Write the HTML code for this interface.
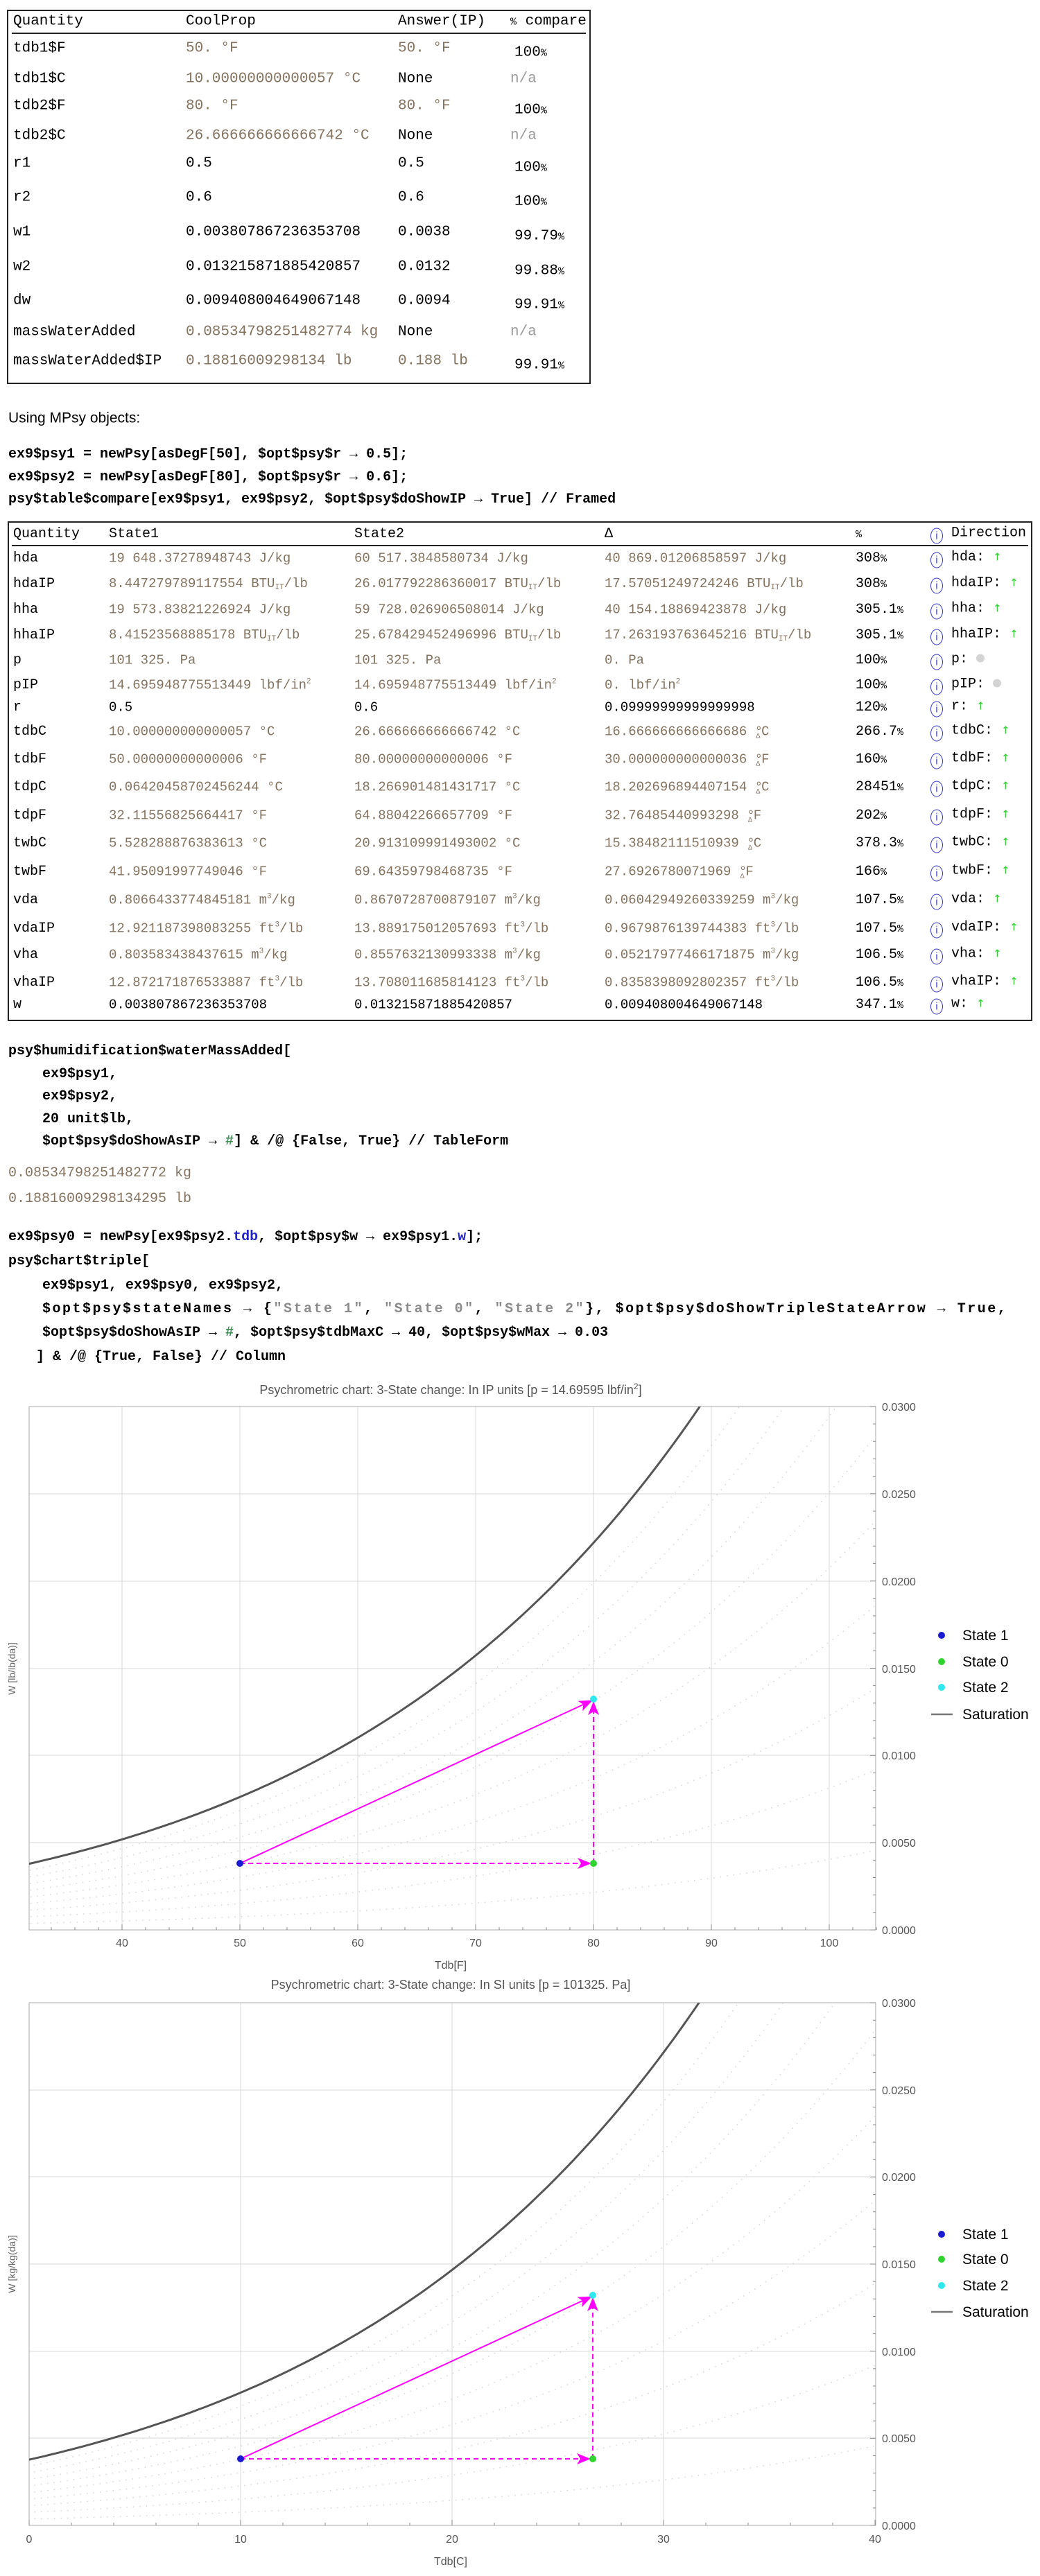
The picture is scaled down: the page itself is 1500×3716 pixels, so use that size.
<!DOCTYPE html>
<html><head><meta charset="utf-8">
<style>
html,body{margin:0;padding:0;background:#fff;}
body{width:1500px;height:3716px;position:relative;overflow:hidden;font-family:"Liberation Mono",monospace;color:#000;}
.t{position:absolute;white-space:pre;line-height:1.2;transform:translateY(-50%);}
.m21{font-size:21px;}
.m20{font-size:20px;}
.m19{font-size:19px;}
.v{color:#83735f;}
.g{color:#999;}
.c{font-weight:bold;font-size:20px;}
.frame{position:absolute;border:2px solid #222;box-sizing:border-box;}
.rule{position:absolute;height:2px;background:#222;}
.pc{font-size:15px;}
.du{display:inline-block;position:relative;width:0.5em;text-align:center;}
.du i{position:absolute;left:0;top:13px;font-style:normal;font-size:10px;width:100%;}
sub{font-size:11px;vertical-align:-3px;}
sup{font-size:11px;vertical-align:8px;}
.info{display:inline-block;width:16px;height:21px;border:1.5px solid #3838c8;border-radius:50%;color:#3838c8;font-size:15px;line-height:21px;text-align:center;font-family:"Liberation Sans",sans-serif;vertical-align:-4px;box-sizing:content-box;}
.up{color:#2fcf2f;font-family:"DejaVu Sans",sans-serif;font-size:15px;}
.dot{display:inline-block;width:12px;height:12px;border-radius:50%;background:#d4d4d4;vertical-align:0px;}
.sans{font-family:"Liberation Sans",sans-serif;}
.gr{color:#3b8a52;}
.bl{color:#2323c8;}
.st{color:#8a8a8a;}
</style></head><body>

<!-- Table 1 -->
<div class="frame" style="left:10px;top:14px;width:842px;height:540px;"></div>
<div class="rule" style="left:17px;top:47px;width:828px;"></div>
<div class="t m21" style="left:19px;top:31px">Quantity</div>
<div class="t m21" style="left:268px;top:31px">CoolProp</div>
<div class="t m21" style="left:574px;top:31px">Answer(IP)</div>
<div class="t m21" style="left:736px;top:31px"><span class="pc">%</span> compare</div>

<div class="t m21" style="left:19px;top:70px">tdb1$F</div><div class="t m21 v" style="left:268px;top:70px">50. °F</div><div class="t m21 v" style="left:574px;top:70px">50. °F</div><div class="t m21" style="left:742px;top:76px">100<span class="pc">%</span></div>
<div class="t m21" style="left:19px;top:114px">tdb1$C</div><div class="t m21 v" style="left:268px;top:114px">10.00000000000057 °C</div><div class="t m21" style="left:574px;top:114px">None</div><div class="t m21 g" style="left:736px;top:114px">n/a</div>
<div class="t m21" style="left:19px;top:153px">tdb2$F</div><div class="t m21 v" style="left:268px;top:153px">80. °F</div><div class="t m21 v" style="left:574px;top:153px">80. °F</div><div class="t m21" style="left:742px;top:159px">100<span class="pc">%</span></div>
<div class="t m21" style="left:19px;top:196px">tdb2$C</div><div class="t m21 v" style="left:268px;top:196px">26.666666666666742 °C</div><div class="t m21" style="left:574px;top:196px">None</div><div class="t m21 g" style="left:736px;top:196px">n/a</div>
<div class="t m21" style="left:19px;top:236px">r1</div><div class="t m21" style="left:268px;top:236px">0.5</div><div class="t m21" style="left:574px;top:236px">0.5</div><div class="t m21" style="left:742px;top:242px">100<span class="pc">%</span></div>
<div class="t m21" style="left:19px;top:285px">r2</div><div class="t m21" style="left:268px;top:285px">0.6</div><div class="t m21" style="left:574px;top:285px">0.6</div><div class="t m21" style="left:742px;top:291px">100<span class="pc">%</span></div>
<div class="t m21" style="left:19px;top:335px">w1</div><div class="t m21" style="left:268px;top:335px">0.003807867236353708</div><div class="t m21" style="left:574px;top:335px">0.0038</div><div class="t m21" style="left:742px;top:341px">99.79<span class="pc">%</span></div>
<div class="t m21" style="left:19px;top:385px">w2</div><div class="t m21" style="left:268px;top:385px">0.013215871885420857</div><div class="t m21" style="left:574px;top:385px">0.0132</div><div class="t m21" style="left:742px;top:391px">99.88<span class="pc">%</span></div>
<div class="t m21" style="left:19px;top:434px">dw</div><div class="t m21" style="left:268px;top:434px">0.009408004649067148</div><div class="t m21" style="left:574px;top:434px">0.0094</div><div class="t m21" style="left:742px;top:440px">99.91<span class="pc">%</span></div>
<div class="t m21" style="left:19px;top:479px">massWaterAdded</div><div class="t m21 v" style="left:268px;top:479px">0.08534798251482774 kg</div><div class="t m21" style="left:574px;top:479px">None</div><div class="t m21 g" style="left:736px;top:479px">n/a</div>
<div class="t m21" style="left:19px;top:521px">massWaterAdded$IP</div><div class="t m21 v" style="left:268px;top:521px">0.18816009298134 lb</div><div class="t m21 v" style="left:574px;top:521px">0.188 lb</div><div class="t m21" style="left:742px;top:527px">99.91<span class="pc">%</span></div>

<div class="t sans" style="left:12px;top:603px;font-size:21px;">Using MPsy objects:</div>
<div class="t c" style="left:12px;top:656px">ex9$psy1 = newPsy[asDegF[50], $opt$psy$r → 0.5];</div>
<div class="t c" style="left:12px;top:689px">ex9$psy2 = newPsy[asDegF[80], $opt$psy$r → 0.6];</div>
<div class="t c" style="left:12px;top:721px">psy$table$compare[ex9$psy1, ex9$psy2, $opt$psy$doShowIP → True] // Framed</div>

<!-- Table 2 -->
<div class="frame" style="left:11px;top:752px;width:1478px;height:721px;"></div>
<div class="rule" style="left:17px;top:786px;width:1466px;"></div>
<div class="t m20" style="left:19px;top:771px">Quantity</div>
<div class="t m20" style="left:157px;top:771px">State1</div>
<div class="t m20" style="left:511px;top:771px">State2</div>
<div class="t m20" style="left:872px;top:771px">Δ</div>
<div class="t m20" style="left:1234px;top:771px"><span class="pc">%</span></div>
<div class="t m20" style="left:1342px;top:771px"><span class="info">i</span> Direction</div>

<div class="t m20" style="left:19px;top:806px">hda</div><div class="t m19 v" style="left:157px;top:806px">19 648.37278948743 J/kg</div><div class="t m19 v" style="left:511px;top:806px">60 517.3848580734 J/kg</div><div class="t m19 v" style="left:872px;top:806px">40 869.01206858597 J/kg</div><div class="t m20" style="left:1234px;top:806px">308<span class="pc">%</span></div><div class="t m20" style="left:1342px;top:806px"><span class="info">i</span> hda: <span class="up">↑</span></div>
<div class="t m20" style="left:19px;top:843px">hdaIP</div><div class="t m19 v" style="left:157px;top:843px">8.447279789117554 BTU<sub>IT</sub>/lb</div><div class="t m19 v" style="left:511px;top:843px">26.017792286360017 BTU<sub>IT</sub>/lb</div><div class="t m19 v" style="left:872px;top:843px">17.57051249724246 BTU<sub>IT</sub>/lb</div><div class="t m20" style="left:1234px;top:843px">308<span class="pc">%</span></div><div class="t m20" style="left:1342px;top:843px"><span class="info">i</span> hdaIP: <span class="up">↑</span></div>
<div class="t m20" style="left:19px;top:880px">hha</div><div class="t m19 v" style="left:157px;top:880px">19 573.83821226924 J/kg</div><div class="t m19 v" style="left:511px;top:880px">59 728.026906508014 J/kg</div><div class="t m19 v" style="left:872px;top:880px">40 154.18869423878 J/kg</div><div class="t m20" style="left:1234px;top:880px">305.1<span class="pc">%</span></div><div class="t m20" style="left:1342px;top:880px"><span class="info">i</span> hha: <span class="up">↑</span></div>
<div class="t m20" style="left:19px;top:917px">hhaIP</div><div class="t m19 v" style="left:157px;top:917px">8.41523568885178 BTU<sub>IT</sub>/lb</div><div class="t m19 v" style="left:511px;top:917px">25.678429452496996 BTU<sub>IT</sub>/lb</div><div class="t m19 v" style="left:872px;top:917px">17.263193763645216 BTU<sub>IT</sub>/lb</div><div class="t m20" style="left:1234px;top:917px">305.1<span class="pc">%</span></div><div class="t m20" style="left:1342px;top:917px"><span class="info">i</span> hhaIP: <span class="up">↑</span></div>
<div class="t m20" style="left:19px;top:953px">p</div><div class="t m19 v" style="left:157px;top:953px">101 325. Pa</div><div class="t m19 v" style="left:511px;top:953px">101 325. Pa</div><div class="t m19 v" style="left:872px;top:953px">0. Pa</div><div class="t m20" style="left:1234px;top:953px">100<span class="pc">%</span></div><div class="t m20" style="left:1342px;top:953px"><span class="info">i</span> p: <span class="dot"></span></div>
<div class="t m20" style="left:19px;top:989px">pIP</div><div class="t m19 v" style="left:157px;top:989px">14.695948775513449 lbf/in<sup>2</sup></div><div class="t m19 v" style="left:511px;top:989px">14.695948775513449 lbf/in<sup>2</sup></div><div class="t m19 v" style="left:872px;top:989px">0. lbf/in<sup>2</sup></div><div class="t m20" style="left:1234px;top:989px">100<span class="pc">%</span></div><div class="t m20" style="left:1342px;top:989px"><span class="info">i</span> pIP: <span class="dot"></span></div>
<div class="t m20" style="left:19px;top:1021px">r</div><div class="t m19" style="left:157px;top:1021px">0.5</div><div class="t m19" style="left:511px;top:1021px">0.6</div><div class="t m19" style="left:872px;top:1021px">0.09999999999999998</div><div class="t m20" style="left:1234px;top:1021px">120<span class="pc">%</span></div><div class="t m20" style="left:1342px;top:1021px"><span class="info">i</span> r: <span class="up">↑</span></div>
<div class="t m20" style="left:19px;top:1056px">tdbC</div><div class="t m19 v" style="left:157px;top:1056px">10.000000000000057 °C</div><div class="t m19 v" style="left:511px;top:1056px">26.666666666666742 °C</div><div class="t m19 v" style="left:872px;top:1056px">16.666666666666686 <span class="du">°<i>Δ</i></span>C</div><div class="t m20" style="left:1234px;top:1056px">266.7<span class="pc">%</span></div><div class="t m20" style="left:1342px;top:1056px"><span class="info">i</span> tdbC: <span class="up">↑</span></div>
<div class="t m20" style="left:19px;top:1096px">tdbF</div><div class="t m19 v" style="left:157px;top:1096px">50.00000000000006 °F</div><div class="t m19 v" style="left:511px;top:1096px">80.00000000000006 °F</div><div class="t m19 v" style="left:872px;top:1096px">30.000000000000036 <span class="du">°<i>Δ</i></span>F</div><div class="t m20" style="left:1234px;top:1096px">160<span class="pc">%</span></div><div class="t m20" style="left:1342px;top:1096px"><span class="info">i</span> tdbF: <span class="up">↑</span></div>
<div class="t m20" style="left:19px;top:1136px">tdpC</div><div class="t m19 v" style="left:157px;top:1136px">0.06420458702456244 °C</div><div class="t m19 v" style="left:511px;top:1136px">18.266901481431717 °C</div><div class="t m19 v" style="left:872px;top:1136px">18.202696894407154 <span class="du">°<i>Δ</i></span>C</div><div class="t m20" style="left:1234px;top:1136px">28451<span class="pc">%</span></div><div class="t m20" style="left:1342px;top:1136px"><span class="info">i</span> tdpC: <span class="up">↑</span></div>
<div class="t m20" style="left:19px;top:1177px">tdpF</div><div class="t m19 v" style="left:157px;top:1177px">32.11556825664417 °F</div><div class="t m19 v" style="left:511px;top:1177px">64.88042266657709 °F</div><div class="t m19 v" style="left:872px;top:1177px">32.76485440993298 <span class="du">°<i>Δ</i></span>F</div><div class="t m20" style="left:1234px;top:1177px">202<span class="pc">%</span></div><div class="t m20" style="left:1342px;top:1177px"><span class="info">i</span> tdpF: <span class="up">↑</span></div>
<div class="t m20" style="left:19px;top:1217px">twbC</div><div class="t m19 v" style="left:157px;top:1217px">5.528288876383613 °C</div><div class="t m19 v" style="left:511px;top:1217px">20.913109991493002 °C</div><div class="t m19 v" style="left:872px;top:1217px">15.38482111510939 <span class="du">°<i>Δ</i></span>C</div><div class="t m20" style="left:1234px;top:1217px">378.3<span class="pc">%</span></div><div class="t m20" style="left:1342px;top:1217px"><span class="info">i</span> twbC: <span class="up">↑</span></div>
<div class="t m20" style="left:19px;top:1258px">twbF</div><div class="t m19 v" style="left:157px;top:1258px">41.95091997749046 °F</div><div class="t m19 v" style="left:511px;top:1258px">69.64359798468735 °F</div><div class="t m19 v" style="left:872px;top:1258px">27.6926780071969 <span class="du">°<i>Δ</i></span>F</div><div class="t m20" style="left:1234px;top:1258px">166<span class="pc">%</span></div><div class="t m20" style="left:1342px;top:1258px"><span class="info">i</span> twbF: <span class="up">↑</span></div>
<div class="t m20" style="left:19px;top:1299px">vda</div><div class="t m19 v" style="left:157px;top:1299px">0.8066433774845181 m<sup>3</sup>/kg</div><div class="t m19 v" style="left:511px;top:1299px">0.8670728700879107 m<sup>3</sup>/kg</div><div class="t m19 v" style="left:872px;top:1299px">0.06042949260339259 m<sup>3</sup>/kg</div><div class="t m20" style="left:1234px;top:1299px">107.5<span class="pc">%</span></div><div class="t m20" style="left:1342px;top:1299px"><span class="info">i</span> vda: <span class="up">↑</span></div>
<div class="t m20" style="left:19px;top:1340px">vdaIP</div><div class="t m19 v" style="left:157px;top:1340px">12.921187398083255 ft<sup>3</sup>/lb</div><div class="t m19 v" style="left:511px;top:1340px">13.889175012057693 ft<sup>3</sup>/lb</div><div class="t m19 v" style="left:872px;top:1340px">0.9679876139744383 ft<sup>3</sup>/lb</div><div class="t m20" style="left:1234px;top:1340px">107.5<span class="pc">%</span></div><div class="t m20" style="left:1342px;top:1340px"><span class="info">i</span> vdaIP: <span class="up">↑</span></div>
<div class="t m20" style="left:19px;top:1378px">vha</div><div class="t m19 v" style="left:157px;top:1378px">0.803583438437615 m<sup>3</sup>/kg</div><div class="t m19 v" style="left:511px;top:1378px">0.8557632130993338 m<sup>3</sup>/kg</div><div class="t m19 v" style="left:872px;top:1378px">0.05217977466171875 m<sup>3</sup>/kg</div><div class="t m20" style="left:1234px;top:1378px">106.5<span class="pc">%</span></div><div class="t m20" style="left:1342px;top:1378px"><span class="info">i</span> vha: <span class="up">↑</span></div>
<div class="t m20" style="left:19px;top:1418px">vhaIP</div><div class="t m19 v" style="left:157px;top:1418px">12.872171876533887 ft<sup>3</sup>/lb</div><div class="t m19 v" style="left:511px;top:1418px">13.708011685814123 ft<sup>3</sup>/lb</div><div class="t m19 v" style="left:872px;top:1418px">0.8358398092802357 ft<sup>3</sup>/lb</div><div class="t m20" style="left:1234px;top:1418px">106.5<span class="pc">%</span></div><div class="t m20" style="left:1342px;top:1418px"><span class="info">i</span> vhaIP: <span class="up">↑</span></div>
<div class="t m20" style="left:19px;top:1450px">w</div><div class="t m19" style="left:157px;top:1450px">0.003807867236353708</div><div class="t m19" style="left:511px;top:1450px">0.013215871885420857</div><div class="t m19" style="left:872px;top:1450px">0.009408004649067148</div><div class="t m20" style="left:1234px;top:1450px">347.1<span class="pc">%</span></div><div class="t m20" style="left:1342px;top:1450px"><span class="info">i</span> w: <span class="up">↑</span></div>

<!-- code block -->
<div class="t c" style="left:12px;top:1517px">psy$humidification$waterMassAdded[</div>
<div class="t c" style="left:61px;top:1550px">ex9$psy1,</div>
<div class="t c" style="left:61px;top:1582px">ex9$psy2,</div>
<div class="t c" style="left:61px;top:1615px">20 unit$lb,</div>
<div class="t c" style="left:61px;top:1647px">$opt$psy$doShowAsIP → <span class="gr">#</span>] &amp; /@ {False, True} // TableForm</div>
<div class="t m20 v" style="left:12px;top:1693px">0.08534798251482772 kg</div>
<div class="t m20 v" style="left:12px;top:1730px">0.18816009298134295 lb</div>
<div class="t c" style="left:12px;top:1785px">ex9$psy0 = newPsy[ex9$psy2.<span class="bl">tdb</span>, $opt$psy$w → ex9$psy1.<span class="bl">w</span>];</div>
<div class="t c" style="left:12px;top:1820px">psy$chart$triple[</div>
<div class="t c" style="left:61px;top:1855px">ex9$psy1, ex9$psy0, ex9$psy2,</div>
<div class="t c" style="left:61px;top:1889px;letter-spacing:2.5px">$opt$psy$stateNames → {<span class="st">"State 1"</span>, <span class="st">"State 0"</span>, <span class="st">"State 2"</span>}, $opt$psy$doShowTripleStateArrow → True,</div>
<div class="t c" style="left:61px;top:1923px">$opt$psy$doShowAsIP → <span class="gr">#</span>, $opt$psy$tdbMaxC → 40, $opt$psy$wMax → 0.03</div>
<div class="t c" style="left:52px;top:1958px">] &amp; /@ {True, False} // Column</div>

<!-- Chart 1 -->
<svg style="position:absolute;left:0;top:1985px" width="1500" height="870" viewBox="0 1985 1500 870" font-family="Liberation Sans, sans-serif">
<defs>
<clipPath id="cp1"><rect x="42" y="2029" width="1221" height="755"/></clipPath>
<marker id="ah2" markerWidth="20" markerHeight="16" refX="19" refY="8" orient="auto" markerUnits="userSpaceOnUse"><path d="M0,0 L20,8 L0,16 L5,8 Z" fill="#f0f"/></marker>
</defs>
<text x="650" y="2011" text-anchor="middle" font-size="18" fill="#555">Psychrometric chart: 3-State change: In IP units [p = 14.69595 lbf/in<tspan font-size="12" dy="-7">2</tspan><tspan dy="7">]</tspan></text>
<g stroke="#d8d8d8" stroke-width="1">
<line x1="176" y1="2029" x2="176" y2="2784"/><line x1="346" y1="2029" x2="346" y2="2784"/><line x1="516" y1="2029" x2="516" y2="2784"/><line x1="686" y1="2029" x2="686" y2="2784"/><line x1="856" y1="2029" x2="856" y2="2784"/><line x1="1026" y1="2029" x2="1026" y2="2784"/><line x1="1196" y1="2029" x2="1196" y2="2784"/>
<line x1="42" y1="2155" x2="1263" y2="2155"/><line x1="42" y1="2281" x2="1263" y2="2281"/><line x1="42" y1="2407" x2="1263" y2="2407"/><line x1="42" y1="2532" x2="1263" y2="2532"/><line x1="42" y1="2658" x2="1263" y2="2658"/>
</g>
<g id="rh1" clip-path="url(#cp1)" fill="none" stroke="#d4d4d4" stroke-width="1.5" stroke-dasharray="1.5 8"></g>
<rect x="42" y="2029" width="1221" height="755" fill="none" stroke="#aaa" stroke-width="1"/>
<g stroke="#888" stroke-width="1" id="tk1"></g>
<g font-size="16" fill="#555" text-anchor="middle">
<text x="176" y="2808">40</text><text x="346" y="2808">50</text><text x="516" y="2808">60</text><text x="686" y="2808">70</text><text x="856" y="2808">80</text><text x="1026" y="2808">90</text><text x="1196" y="2808">100</text>
<text x="650" y="2840">Tdb[F]</text>
</g>
<g font-size="16" fill="#555">
<text x="1272" y="2035">0.0300</text><text x="1272" y="2161">0.0250</text><text x="1272" y="2287">0.0200</text><text x="1272" y="2413">0.0150</text><text x="1272" y="2538">0.0100</text><text x="1272" y="2664">0.0050</text><text x="1272" y="2790">0.0000</text>
</g>
<text transform="translate(22,2407) rotate(-90)" text-anchor="middle" font-size="14" fill="#666">W [lb/lb(da)]</text>
<g clip-path="url(#cp1)"><polyline id="sat1" fill="none" stroke="#555" stroke-width="3" points="40,2689 80,2678 120,2667 176,2653 220,2640 261,2625 300,2610 346,2592 390,2573 431,2553 475,2529 516,2506 560,2478 601,2452 645,2421 686,2387 730,2350 771,2312 815,2265 856,2224 900,2174 941,2122 975,2074 1004,2029 1020,2005"/></g>
<line x1="346" y1="2688" x2="854" y2="2453" stroke="#f0f" stroke-width="2" marker-end="url(#ah2)"/>
<line x1="346" y1="2688" x2="852" y2="2688" stroke="#f0f" stroke-width="2" stroke-dasharray="7 5" marker-end="url(#ah2)"/>
<line x1="856" y1="2688" x2="856" y2="2455" stroke="#f0f" stroke-width="2" stroke-dasharray="7 5" marker-end="url(#ah2)"/>
<circle cx="346" cy="2688" r="5" fill="#1a1ad0"/>
<circle cx="856" cy="2688" r="5" fill="#2fd42f"/>
<circle cx="856" cy="2451" r="5" fill="#2ee8ee"/>
<circle cx="1358" cy="2359" r="5" fill="#1a1ad0"/><text x="1388" y="2366" font-size="21">State 1</text>
<circle cx="1358" cy="2397" r="5" fill="#2fd42f"/><text x="1388" y="2404" font-size="21">State 0</text>
<circle cx="1358" cy="2434" r="5" fill="#2ee8ee"/><text x="1388" y="2441" font-size="21">State 2</text>
<line x1="1343" y1="2473" x2="1374" y2="2473" stroke="#777" stroke-width="2.5"/><text x="1388" y="2480" font-size="21">Saturation</text>
</svg>

<!-- Chart 2 -->
<svg style="position:absolute;left:0;top:2845px" width="1500" height="871" viewBox="0 2845 1500 871" font-family="Liberation Sans, sans-serif">
<defs>
<clipPath id="cp2"><rect x="42" y="2889" width="1221" height="754"/></clipPath>
<marker id="ah3" markerWidth="20" markerHeight="16" refX="19" refY="8" orient="auto" markerUnits="userSpaceOnUse"><path d="M0,0 L20,8 L0,16 L5,8 Z" fill="#f0f"/></marker>
</defs>
<text x="650" y="2869" text-anchor="middle" font-size="18" fill="#555">Psychrometric chart: 3-State change: In SI units [p = 101325. Pa]</text>
<g stroke="#d8d8d8" stroke-width="1">
<line x1="347" y1="2889" x2="347" y2="3643"/><line x1="652" y1="2889" x2="652" y2="3643"/><line x1="957" y1="2889" x2="957" y2="3643"/>
<line x1="42" y1="3015" x2="1263" y2="3015"/><line x1="42" y1="3140" x2="1263" y2="3140"/><line x1="42" y1="3266" x2="1263" y2="3266"/><line x1="42" y1="3392" x2="1263" y2="3392"/><line x1="42" y1="3517" x2="1263" y2="3517"/>
</g>
<g id="rh2" clip-path="url(#cp2)" fill="none" stroke="#d4d4d4" stroke-width="1.5" stroke-dasharray="1.5 8"></g>
<rect x="42" y="2889" width="1221" height="754" fill="none" stroke="#aaa" stroke-width="1"/>
<g stroke="#888" stroke-width="1" id="tk2"></g>
<g font-size="16" fill="#555" text-anchor="middle">
<text x="42" y="3668">0</text><text x="347" y="3668">10</text><text x="652" y="3668">20</text><text x="957" y="3668">30</text><text x="1262" y="3668">40</text>
<text x="650" y="3700">Tdb[C]</text>
</g>
<g font-size="16" fill="#555">
<text x="1272" y="2895">0.0300</text><text x="1272" y="3021">0.0250</text><text x="1272" y="3146">0.0200</text><text x="1272" y="3272">0.0150</text><text x="1272" y="3398">0.0100</text><text x="1272" y="3523">0.0050</text><text x="1272" y="3649">0.0000</text>
</g>
<text transform="translate(22,3266) rotate(-90)" text-anchor="middle" font-size="14" fill="#666">W [kg/kg(da)]</text>
<g clip-path="url(#cp2)"><polyline id="sat2" fill="none" stroke="#555" stroke-width="3" points="42,3548 118,3529 194,3507 270,3481 347,3451 423,3416 499,3375 576,3328 652,3274 728,3210 804,3138 880,3054 957,2959 1003,2889 1020,2860"/></g>
<line x1="347" y1="3547" x2="853" y2="3313" stroke="#f0f" stroke-width="2" marker-end="url(#ah3)"/>
<line x1="347" y1="3547" x2="851" y2="3547" stroke="#f0f" stroke-width="2" stroke-dasharray="7 5" marker-end="url(#ah3)"/>
<line x1="855" y1="3547" x2="855" y2="3315" stroke="#f0f" stroke-width="2" stroke-dasharray="7 5" marker-end="url(#ah3)"/>
<circle cx="347" cy="3547" r="5" fill="#1a1ad0"/>
<circle cx="855" cy="3547" r="5" fill="#2fd42f"/>
<circle cx="855" cy="3311" r="5" fill="#2ee8ee"/>
<circle cx="1358" cy="3223" r="5" fill="#1a1ad0"/><text x="1388" y="3230" font-size="21">State 1</text>
<circle cx="1358" cy="3259" r="5" fill="#2fd42f"/><text x="1388" y="3266" font-size="21">State 0</text>
<circle cx="1358" cy="3297" r="5" fill="#2ee8ee"/><text x="1388" y="3304" font-size="21">State 2</text>
<line x1="1343" y1="3335" x2="1374" y2="3335" stroke="#777" stroke-width="2.5"/><text x="1388" y="3342" font-size="21">Saturation</text>
</svg>

<script>
(function(){
var NS="http://www.w3.org/2000/svg";
function ps(tc){return 610.94*Math.exp(17.625*tc/(tc+243.04));}
function W(tc,rh){var p=rh*ps(tc);return 0.622*p/(101325-p);}
var g1=document.getElementById("rh1"),g2=document.getElementById("rh2");
for(var r=1;r<=9;r++){
 var rh=r/10,a=[],b=[];
 for(var T=30;T<=106;T+=1){var tc=(T-32)/1.8;a.push((176+17*(T-40)).toFixed(1)+","+(2784-W(tc,rh)*25167).toFixed(1));}
 for(var t=-1;t<=41;t+=0.5){b.push((42+30.5*t).toFixed(1)+","+(3643-W(t,rh)*25133).toFixed(1));}
 var p1=document.createElementNS(NS,"polyline");p1.setAttribute("points",a.join(" "));g1.appendChild(p1);
 var p2=document.createElementNS(NS,"polyline");p2.setAttribute("points",b.join(" "));g2.appendChild(p2);
}
var s1=[],s2=[];
for(var T=30;T<=92;T+=0.5){var tc=(T-32)/1.8;s1.push((176+17*(T-40)).toFixed(1)+","+(2784-W(tc,1)*25167).toFixed(1));}
for(var t=-1;t<=33;t+=0.25){s2.push((42+30.5*t).toFixed(1)+","+(3643-W(t,1)*25133).toFixed(1));}
document.getElementById("sat1").setAttribute("points",s1.join(" "));
document.getElementById("sat2").setAttribute("points",s2.join(" "));
var k1=document.getElementById("tk1"),k2=document.getElementById("tk2");
function ln(g,x1,y1,x2,y2){var l=document.createElementNS(NS,"line");l.setAttribute("x1",x1);l.setAttribute("y1",y1);l.setAttribute("x2",x2);l.setAttribute("y2",y2);g.appendChild(l);}
for(var T=34;T<=104;T+=2){var x=176+17*(T-40);ln(k1,x,2784,x,2784-(T%10==0?8:4));}
for(var t=0;t<=40;t+=2){var x=42+30.5*t;ln(k2,x,3643,x,3643-(t%10==0?8:4));}
for(var i=0;i<=30;i++){var y=2784-i*25.17;ln(k1,1263,y,1263-(i%5==0?8:4),y);var y2=3643-i*25.13;ln(k2,1263,y2,1263-(i%5==0?8:4),y2);}
})();
</script>
</body></html>
